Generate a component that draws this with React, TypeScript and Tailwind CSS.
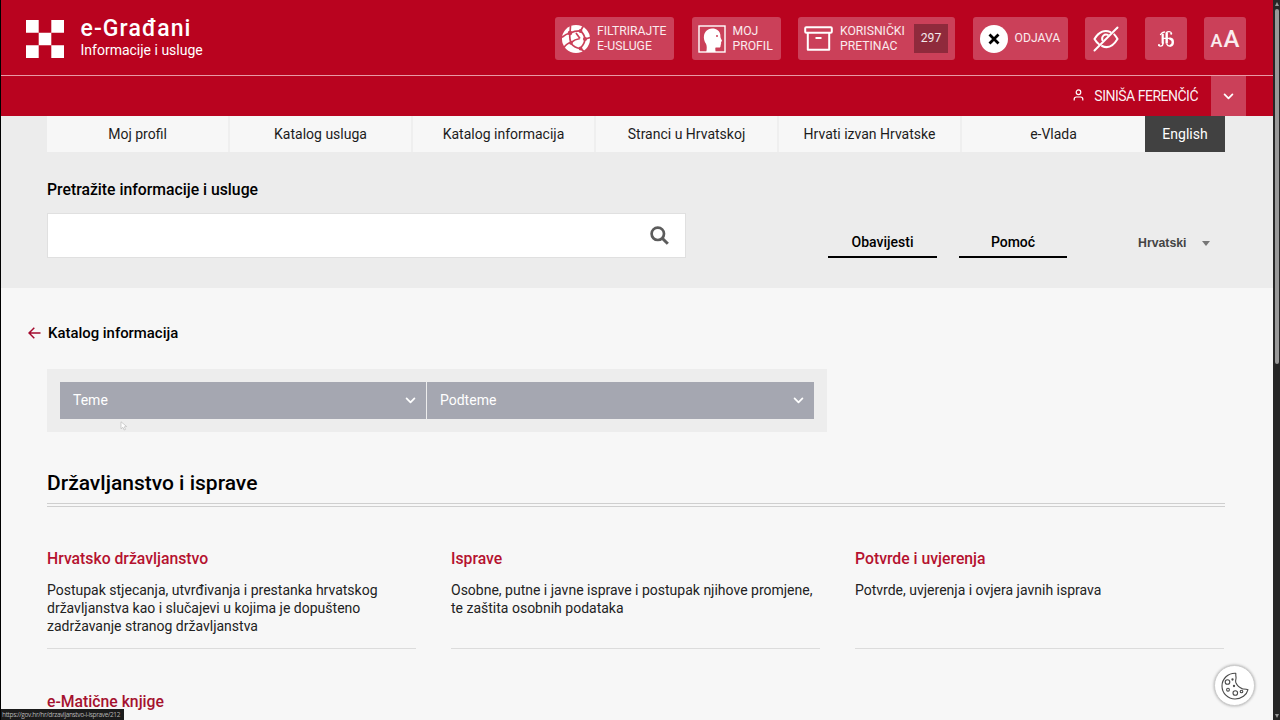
import { ReactNode } from "react";

type Topic = {
  title: string;
  text: string[];
};

const navItems = [
  "Moj profil",
  "Katalog usluga",
  "Katalog informacija",
  "Stranci u Hrvatskoj",
  "Hrvati izvan Hrvatske",
  "e-Vlada",
];

const topics: Topic[] = [
  {
    title: "Hrvatsko državljanstvo",
    text: [
      "Postupak stjecanja, utvrđivanja i prestanka hrvatskog",
      "državljanstva kao i slučajevi u kojima je dopušteno",
      "zadržavanje stranog državljanstva",
    ],
  },
  {
    title: "Isprave",
    text: ["Osobne, putne i javne isprave i postupak njihove promjene,", "te zaštita osobnih podataka"],
  },
  {
    title: "Potvrde i uvjerenja",
    text: ["Potvrde, uvjerenja i ovjera javnih isprava"],
  },
];

function Chevron({ className }: { className?: string }) {
  return (
    <svg viewBox="0 0 12 8" fill="none" stroke="currentColor" strokeWidth="2" strokeLinecap="round" strokeLinejoin="round" className={className}>
      <path d="M1.500 1.700 6 6.200l4.500-4.500" />
    </svg>
  );
}

function Logo() {
  return (
    <svg viewBox="0 0 38 38" fill="currentColor" className="mt-[20px] ml-px size-[38px] text-white">
      <path d="M0 0h12.700v12.700H0zM25.300 0H38v12.700H25.300zM12.700 12.700h12.600v12.600H12.700zM0 25.300h12.700V38H0zM25.300 25.300H38V38H25.300z" />
    </svg>
  );
}

function BallIcon() {
  return (
    <svg viewBox="0 0 28 28" className="size-7">
      <circle cx="14" cy="14" r="14" fill="#fff" />
      <g stroke="#cb4059" strokeWidth="1.700" fill="none">
        <path d="M8.500 1 8 8M8 8c-3 .5-5.500 2-8 4.500M8 8c4-1.700 7-2.200 10.500-2M18.500 6 21 1.500M18.500 6c2.500 2 4 4.500 4.500 8M23 14l5.500-1.500M23 14c-.3 4-2 6.500-4.500 9M18.500 23.500l3.500 3M18.500 23.500C14 23 11.500 21.500 9 18.500M9 17.500C7.500 14 7.500 11 8 8M9 17.500c-3 .5-5 2-7 5M18 13.500C15 14 11.500 15.500 9 17.500M18 13.500 14 8" />
      </g>
      <g fill="#cb4059">
        <circle cx="8" cy="8" r="2.300" />
        <circle cx="18.500" cy="6" r="1.900" />
        <circle cx="23" cy="14" r="2.100" />
        <circle cx="9" cy="17.800" r="1.900" />
        <circle cx="18.500" cy="23.500" r="1.900" />
      </g>
    </svg>
  );
}

function ProfileIcon() {
  return (
    <svg viewBox="0 0 28 28" className="size-7">
      <rect x="1" y="1" width="26" height="26" fill="none" stroke="#fff" strokeWidth="1.400" />
      <path
        fill="#fff"
        d="M8.300 27c.6-3.300.7-5.700-.2-8C6.200 16.300 5.500 13.500 6 10.500 6.800 6.300 10 3.700 14 3.500c4.300-.2 7.700 2.300 8.300 6 .2 1.300 0 2.300.4 3.400l1.300 2.800c.2.500 0 .8-1 1l.2 1.600-.4.700.1.900c-.5.400-.3 1-.4 1.500-.2 1.100-1.200 1.400-4.400 1-.7 0-.9.700-.8 1.600l.3 3z"
      />
      <circle cx="19" cy="11" r="1" fill="#cb4059" />
    </svg>
  );
}

function BoxIcon() {
  return (
    <svg viewBox="0 0 29 25" fill="none" stroke="#fff" strokeWidth="2" strokeLinejoin="round" className="h-[25px] w-[29px]">
      <rect x="1.200" y="1.200" width="26.600" height="5.600" rx="1" />
      <path d="M3.800 6.800v17h21.400v-17M11.500 12h6" />
    </svg>
  );
}

function EyeIcon() {
  return (
    <svg viewBox="0 0 26 26" fill="none" stroke="#fff" strokeWidth="2" strokeLinecap="round" className="size-[26px]">
      <path d="M17.500 6.200C12 3.500 6 5.500 1.500 13c1.300 2.300 2.800 4.100 4.500 5.300M21.200 8.400c1.200 1.200 2.300 2.800 3.300 4.600C20 20.500 14.300 22.500 9 20" />
      <path d="M14.800 8.900c-3.300-1.500-6.600 1.700-5.400 5.300" />
      <path d="M24.500 1.500 1.500 24.500" />
    </svg>
  );
}

function DyslexiaIcon() {
  return (
    <svg viewBox="0 0 18 18" fill="none" stroke="#fff" strokeLinecap="round" className="size-[18px]">
      <path strokeWidth="1.300" d="M3.500 4.500C4.500 3 5.500 2 7.500 2M9.500 2.500c1.200-1.200 4.500-1.300 5 .8M6 13c0 2-1 3.200-2.500 3.200-.8 0-1.500-.3-1.800-.8" />
      <path strokeWidth="2.200" d="M5.700 4.500V13" />
      <path strokeWidth="2.400" strokeLinecap="butt" d="M9.700 2.500v11" />
      <path strokeWidth="1.300" d="M6.500 8.300H13M9.700 14c.7 1.600 1.700 2.200 3.300 2.200" />
      <path strokeWidth="2.400" d="M13.200 8.700c1.800.2 2.600 1.500 2.600 3.400s-.8 3.300-2.300 3.500" />
      <circle cx="14.200" cy="3.700" r="1" fill="#fff" stroke="none" />
      <circle cx="2" cy="15" r="1" fill="#fff" stroke="none" />
    </svg>
  );
}

function CookieIcon() {
  return (
    <svg viewBox="0 0 28 28" fill="none" stroke="#4a4a4a" strokeWidth="1.100" strokeLinejoin="round" className="size-7">
      <path d="M14.800 1.200C7 .8 1 6.800 1 14c0 7.200 5.800 13 13 13 6.300 0 11.900-4.200 13-9.300-1.500-.8-3.300-.7-5.200-.7-3-1.200-5.800-3.500-7-6.500-.8-2.200.7-3.500.2-5.500-.3-1.300-.2-2.500-.2-3.800z" />
      <circle cx="6.500" cy="10" r="2.300" />
      <circle cx="14.300" cy="21" r="2.300" />
      <circle cx="7" cy="17.700" r="1.400" />
      <circle cx="20.500" cy="19.500" r="1.300" />
      <circle cx="11.500" cy="7.500" r=".6" />
      <circle cx="13" cy="14" r=".6" />
    </svg>
  );
}

function HeaderButton({ className, children }: { className: string; children: ReactNode }) {
  return (
    <button className={`flex h-[43px] shrink-0 items-center rounded-[3px] bg-[#cb4059] text-left text-[12.200px] leading-[15px] text-white/90 ${className}`}>
      {children}
    </button>
  );
}

function Header() {
  return (
    <header className="bg-[#b9031f] text-white">
      <div className="flex h-[75px] pl-6 pr-[27px]">
        <Logo />
        <div className="ml-[16.500px] mt-[15px]">
          <p className="text-[23px] font-medium leading-[27px] tracking-[1.100px]">e-Građani</p>
          <p className="text-[14px] leading-[17px]">Informacije i usluge</p>
        </div>
        <div className="ml-auto flex gap-[17.500px] pt-[17px]">
          <HeaderButton className="w-[119px] gap-[7px] pl-[7px]">
            <BallIcon />
            <span>
              FILTRIRAJTE
              <br />
              E-USLUGE
            </span>
          </HeaderButton>
          <HeaderButton className="w-[89px] gap-[7px] pl-[6px]">
            <ProfileIcon />
            <span>
              MOJ
              <br />
              PROFIL
            </span>
          </HeaderButton>
          <HeaderButton className="w-[157px] gap-[7px] pl-[6px]">
            <BoxIcon />
            <span>
              KORISNIČKI
              <br />
              PRETINAC
            </span>
            <span className="ml-auto mr-[7px] flex h-[29px] w-[34px] items-center justify-center bg-[#8f2a3c]">297</span>
          </HeaderButton>
          <HeaderButton className="w-[95px] gap-[7px] pl-[7px]">
            <span className="flex size-7 items-center justify-center rounded-full bg-white">
              <svg viewBox="0 0 12 12" stroke="#000" strokeWidth="2.800" className="size-3">
                <path d="m1.500 1.500 9 9M10.500 1.500l-9 9" />
              </svg>
            </span>
            <span>ODJAVA</span>
          </HeaderButton>
          <HeaderButton className="w-[42px] justify-center">
            <EyeIcon />
          </HeaderButton>
          <HeaderButton className="w-[42px] justify-center">
            <DyslexiaIcon />
          </HeaderButton>
          <HeaderButton className="w-[42px] justify-center font-medium">
            <span className="mt-[2px] flex items-baseline gap-px">
              <span className="text-[18px] leading-[43px]">A</span>
              <span className="text-[24px] leading-[43px]">A</span>
            </span>
          </HeaderButton>
        </div>
      </div>
      <div className="flex h-[41px] items-center justify-end border-t border-[#e89aa5] pr-[27px]">
        <svg viewBox="0 0 12 13" fill="none" stroke="#fff" strokeWidth="1.300" className="mb-[2px] mr-[10px] h-[12px] w-[11px]">
          <circle cx="6" cy="3.500" r="2.500" />
          <path d="M1.300 12.500V11c0-1.500.9-2.300 2.300-2.300h4.800c1.400 0 2.300.8 2.300 2.300v1.500" />
        </svg>
        <span className="mr-[13px] text-[14px] leading-[38px] tracking-[-0.500px] text-white/95">SINIŠA FERENČIĆ</span>
        <span className="flex h-full w-[35px] items-center justify-center bg-[#cb4059]">
          <Chevron className="h-[7px] w-[11px]" />
        </span>
      </div>
    </header>
  );
}

function SearchArea() {
  return (
    <section className="h-[172px] bg-[#ececec] pl-[46px] pr-[48px] text-black">
      <nav className="flex h-[36px] text-[14px] leading-[36px] text-[#1c1c1c]">
        {navItems.map((item, i) => (
          <a key={item} className={`w-[183px] bg-[#f7f7f7] text-center ${i < 5 ? "border-r-2 border-[#efefef]" : ""}`}>
            {item}
          </a>
        ))}
        <a className="w-[80px] bg-[#414141] text-center text-white">English</a>
      </nav>
      <h2 className="mt-[28px] text-[15.750px] font-medium leading-[20px]">Pretražite informacije i usluge</h2>
      <div className="mt-[13px] flex items-start">
        <div className="flex h-[45px] w-[639px] items-center justify-end border border-[#e0e0e0] bg-white pr-[16px]">
          <svg viewBox="0 0 19 19" fill="none" stroke="#5c5c5c" strokeWidth="2.700" className="size-[19px]">
            <circle cx="7.800" cy="7.800" r="6.200" />
            <path d="m12.500 12.500 5.300 5.300" strokeWidth="3" />
          </svg>
        </div>
        <a className="ml-[142px] mt-[17px] h-[28px] w-[109px] border-b-2 border-black text-center text-[14px] font-medium leading-[24px]">Obavijesti</a>
        <a className="ml-[22px] mt-[17px] h-[28px] w-[108px] border-b-2 border-black text-center text-[14px] font-medium leading-[24px]">Pomoć</a>
        <div className="ml-[71px] mt-[21px] flex items-center font-['Liberation_Sans',sans-serif] text-[12.300px] font-bold leading-[18px] text-[#444]">
          Hrvatski
          <span className="ml-[15px] mt-px border-x-[4.500px] border-t-[5px] border-x-transparent border-t-[#777]" />
        </div>
      </div>
    </section>
  );
}

function Select({ label, className }: { label: string; className: string }) {
  return (
    <div className={`flex h-[37px] items-center justify-between bg-[#a5a7b1] pl-[13px] pr-[10px] text-[14px] text-white ${className}`}>
      {label}
      <Chevron className="h-[7px] w-[11px]" />
    </div>
  );
}

export default function App() {
  return (
    <div className="flex h-[720px] w-[1280px] overflow-hidden bg-[#f7f7f7] font-[Roboto,sans-serif]">
      <div className="relative w-[1273px] border-l border-black">
        <Header />
        <SearchArea />
        <main className="pl-[46px] pr-[48px] text-black">
          <div className="-ml-[19px] mt-[34px] flex h-[22px] items-center gap-[7px] text-[14.900px] font-medium">
            <svg viewBox="0 0 13 12" fill="none" stroke="#a30a2e" strokeWidth="1.500" className="h-3 w-[13px]">
              <path d="M12.500 6H1M6.300.7 1 6l5.300 5.300" />
            </svg>
            Katalog informacija
          </div>
          <div className="mt-[25px] flex h-[63px] w-[780px] gap-px bg-[#ededed] px-[13px] py-[13px]">
            <Select label="Teme" className="w-[366px]" />
            <Select label="Podteme" className="w-[387px]" />
          </div>
          <h1 className="mt-[38px] text-[21px] font-medium leading-[26px]">Državljanstvo i isprave</h1>
          <div className="mt-[7px] h-[4px] border-y border-[#cfcfcf]" />
          <div className="mt-[41px] grid grid-cols-[369px_369px_369px] gap-x-[35px]">
            {topics.map((t) => (
              <article key={t.title} className="h-[101px] border-b border-[#dcdcdc]">
                <h3 className="text-[15.750px] font-medium leading-[22px] text-[#b5122f]">{t.title}</h3>
                <p className="mt-[11px] whitespace-nowrap text-[14px] leading-[18px] text-[#222]">
                  {t.text.map((line) => (
                    <span key={line} className="block">
                      {line}
                    </span>
                  ))}
                </p>
              </article>
            ))}
          </div>
          <h3 className="mt-[42px] text-[15.750px] font-medium leading-[22px] text-[#a5122f]">e-Matične knjige</h3>
        </main>

        {/* mouse pointer */}
        <svg viewBox="0 0 8 10" className="absolute left-[119px] top-[421px] h-[10px] w-2">
          <path d="M1 .8v7l1.900-1.500 1.300 2.700 1.300-.6-1.200-2.600 2.400-.3z" fill="#fff" stroke="#bbb" strokeWidth=".7" />
        </svg>

        <button className="absolute left-[1213px] top-[665px] flex size-[41px] items-center justify-center rounded-full border border-[#ccc] bg-white shadow-[0_0_3px_rgba(0,0,0,0.35)]">
          <CookieIcon />
        </button>

        <div className="absolute bottom-0 left-0 h-[11px] w-[123px] whitespace-nowrap bg-[#1b1b1b] pl-px font-['Open_Sans',sans-serif] text-[6.500px] leading-[11px] tracking-[-0.350px] text-[#b5b5b5]">
          https://gov.hr/hr/drzavljanstvo-i-isprave/212
        </div>
      </div>
      <div className="flex w-[7px] flex-col items-center bg-[#262626]">
        <span className="mt-[2px] border-x-[2.500px] border-b-[4px] border-x-transparent border-b-[#999]" />
        <span className="mt-[3px] h-[355px] w-[4px] rounded-full bg-[#999]" />
        <span className="mb-[2px] mt-auto border-x-[2.500px] border-t-[4px] border-x-transparent border-t-[#999]" />
      </div>
    </div>
  );
}
